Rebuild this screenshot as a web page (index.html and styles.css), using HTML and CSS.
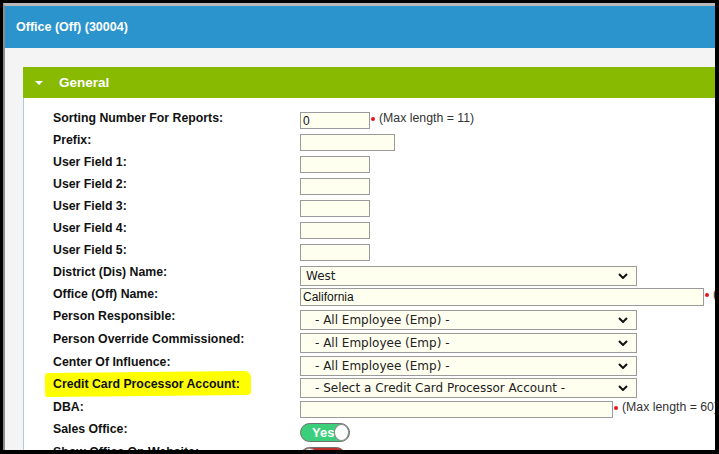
FILE: index.html
```html
<!DOCTYPE html>
<html lang="en">
<head>
    <meta charset="UTF-8">
    <title>Office (Off) (30004)</title>
    <link rel="stylesheet" href="styles.css">
</head>
<body>
    <div class="window">
        <div class="header">Office (Off) (30004)</div>
        <div class="content">
            <div class="panel">
                <div class="panel-title">
                    <span class="caret"></span>
                    <span>General</span>
                </div>
                <div class="panel-body">
                    <div class="row">
                        <div class="label">Sorting Number For Reports:</div>
                        <div class="field">
                            <input class="text short" type="text" value="0">
                            <span class="req"></span>
                            <span class="hint">(Max length = 11)</span>
                        </div>
                    </div>
                    <div class="row">
                        <div class="label">Prefix:</div>
                        <div class="field"><input class="text prefix" type="text"></div>
                    </div>
                    <div class="row">
                        <div class="label">User Field 1:</div>
                        <div class="field"><input class="text short" type="text"></div>
                    </div>
                    <div class="row">
                        <div class="label">User Field 2:</div>
                        <div class="field"><input class="text short" type="text"></div>
                    </div>
                    <div class="row">
                        <div class="label">User Field 3:</div>
                        <div class="field"><input class="text short" type="text"></div>
                    </div>
                    <div class="row">
                        <div class="label">User Field 4:</div>
                        <div class="field"><input class="text short" type="text"></div>
                    </div>
                    <div class="row">
                        <div class="label">User Field 5:</div>
                        <div class="field"><input class="text short" type="text"></div>
                    </div>
                    <div class="row">
                        <div class="label">District (Dis) Name:</div>
                        <div class="field">
                            <div class="select">
                                <span>West</span>
                                <svg width="10" height="6" viewBox="0 0 10 6"><path d="M1 1 L5 5 L9 1" fill="none" stroke="#111" stroke-width="2"/></svg>
                            </div>
                        </div>
                    </div>
                    <div class="row">
                        <div class="label">Office (Off) Name:</div>
                        <div class="field">
                            <input class="text long" type="text" value="California">
                            <span class="req"></span>
                            <span class="hint">(Max length = 50)</span>
                        </div>
                    </div>
                    <div class="row tall">
                        <div class="label">Person Responsible:</div>
                        <div class="field">
                            <div class="select">
                                <span class="dash">- All Employee (Emp) -</span>
                                <svg width="10" height="6" viewBox="0 0 10 6"><path d="M1 1 L5 5 L9 1" fill="none" stroke="#111" stroke-width="2"/></svg>
                            </div>
                        </div>
                    </div>
                    <div class="row tall">
                        <div class="label">Person Override Commissioned:</div>
                        <div class="field">
                            <div class="select">
                                <span class="dash">- All Employee (Emp) -</span>
                                <svg width="10" height="6" viewBox="0 0 10 6"><path d="M1 1 L5 5 L9 1" fill="none" stroke="#111" stroke-width="2"/></svg>
                            </div>
                        </div>
                    </div>
                    <div class="row">
                        <div class="label">Center Of Influence:</div>
                        <div class="field">
                            <div class="select">
                                <span class="dash">- All Employee (Emp) -</span>
                                <svg width="10" height="6" viewBox="0 0 10 6"><path d="M1 1 L5 5 L9 1" fill="none" stroke="#111" stroke-width="2"/></svg>
                            </div>
                        </div>
                    </div>
                    <div class="row tall">
                        <div class="label"><span class="marker">Credit Card Processor Account:</span></div>
                        <div class="field">
                            <div class="select">
                                <span class="dash">- Select a Credit Card Processor Account -</span>
                                <svg width="10" height="6" viewBox="0 0 10 6"><path d="M1 1 L5 5 L9 1" fill="none" stroke="#111" stroke-width="2"/></svg>
                            </div>
                        </div>
                    </div>
                    <div class="row">
                        <div class="label">DBA:</div>
                        <div class="field">
                            <input class="text dba" type="text">
                            <span class="req"></span>
                            <span class="hint">(Max length = 60)</span>
                        </div>
                    </div>
                    <div class="row tall">
                        <div class="label">Sales Office:</div>
                        <div class="field">
                            <div class="toggle on"><span>Yes</span><span class="knob"></span></div>
                        </div>
                    </div>
                    <div class="row">
                        <div class="label">Show Office On Website:</div>
                        <div class="field">
                            <div class="toggle off"><span class="knob"></span><span>No</span></div>
                        </div>
                    </div>
                </div>
            </div>
        </div>
    </div>
</body>
</html>
```

FILE: styles.css
```css
body {
    margin: 0;
    background: #000;
    font-family: "Liberation Sans", Arial, sans-serif;
}

.window {
    margin: 3px 0 0 3px;
    width: 712px;
    height: 447px;
    box-sizing: border-box;
    overflow: hidden;
    background: #f4f4f4;
    border-top: 3px solid #b9b9b9;
    border-left: 2px solid #8c8c8c;
}

.header {
    height: 42px;
    display: flex;
    align-items: center;
    padding-left: 11px;
    background: #2b94cc;
    color: #fff;
    font-weight: bold;
    font-size: 12.5px;
}

.content {
    padding: 19px 0 0 18px;
}

.panel {
    width: 760px;
}

.panel-title {
    height: 31px;
    display: flex;
    align-items: center;
    background: #87ba00;
    color: #fff;
    font-weight: bold;
    font-size: 13.5px;
}

.caret {
    width: 0;
    height: 0;
    margin: 1px 16px 0 12px;
    border-left: 4px solid transparent;
    border-right: 4px solid transparent;
    border-top: 4px solid #fff;
}

.panel-body {
    background: #fff;
    border-left: 1px solid #a9cbe6;
    padding: 14px 0 0 29px;
    height: 400px;
}

.row {
    display: flex;
    height: 22px;
}

.row.tall {
    height: 23px;
}

.label {
    width: 247px;
    flex-shrink: 0;
    margin-top: -1px;
    line-height: 14px;
    font-size: 12.3px;
    font-weight: bold;
    color: #111;
}

.marker {
    position: relative;
    z-index: 0;
}

.marker::before {
    content: "";
    position: absolute;
    z-index: -1;
    left: -8px;
    right: -11px;
    top: -5px;
    bottom: -5px;
    background: #ffff00;
    border-radius: 3px 6px 4px 2px;
    transform: rotate(-0.6deg);
}

.field {
    display: flex;
    align-items: flex-start;
    white-space: nowrap;
}

.text {
    height: 17px;
    margin: 0;
    padding: 0 2px;
    box-sizing: border-box;
    border: 1px solid #9a9a9a;
    background: #fffff0;
    font-family: "Liberation Sans", Arial, sans-serif;
    font-size: 12px;
    color: #111;
}

.text.short {
    width: 70px;
}

.text.prefix {
    width: 95px;
}

.text.long {
    width: 404px;
    height: 18px;
}

.text.dba {
    width: 313px;
}

.req {
    width: 4px;
    height: 4px;
    margin: 5px 4px 0 1px;
    border-radius: 50%;
    background: #e8141c;
    flex-shrink: 0;
}

.hint {
    margin-top: -1px;
    line-height: 14px;
    font-size: 12.3px;
    color: #333;
}

.select {
    width: 337px;
    height: 20px;
    box-sizing: border-box;
    display: flex;
    align-items: center;
    justify-content: space-between;
    padding: 0 8px 0 5px;
    border: 1px solid #9a9a9a;
    background: #fffff0;
    font-family: "DejaVu Sans", Verdana, sans-serif;
    font-size: 12px;
    color: #222;
}

.select .dash {
    padding-left: 9px;
}

.toggle {
    width: 50px;
    height: 19px;
    box-sizing: border-box;
    display: flex;
    align-items: center;
    justify-content: space-between;
    border: 1px solid #707070;
    border-radius: 10px;
    color: #fff;
    font-size: 13px;
    font-weight: bold;
}

.toggle.on {
    padding-left: 11px;
    background: #3ccf7b;
}

.toggle.off {
    width: 46px;
    margin-top: 1px;
    padding-right: 8px;
    background: #c2302b;
}

.knob {
    width: 17px;
    height: 17px;
    box-sizing: border-box;
    border: 1px solid #8a8a8a;
    border-radius: 50%;
    background: #fff;
}
```
